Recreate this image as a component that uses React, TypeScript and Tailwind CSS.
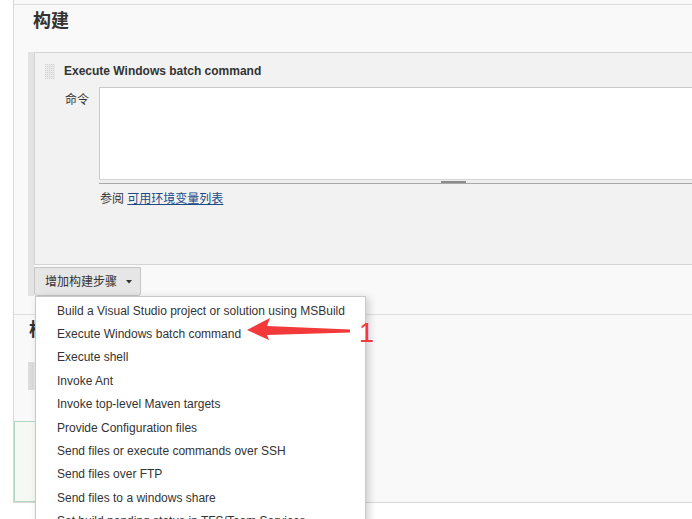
import React from "react";

const stepTypes = [
  "Build a Visual Studio project or solution using MSBuild",
  "Execute Windows batch command",
  "Execute shell",
  "Invoke Ant",
  "Invoke top-level Maven targets",
  "Provide Configuration files",
  "Send files or execute commands over SSH",
  "Send files over FTP",
  "Send files to a windows share",
  "Set build pending status in TFS/Team Services",
];

function DragHandle() {
  const dots = [];
  for (let y = 0; y < 15; y += 2) {
    for (let x = 0; x < 10; x += 2) {
      dots.push(<rect key={`${x}-${y}`} x={x} y={y} width="1" height="1" fill="#cfcfcf" />);
    }
  }
  return (
    <svg width="10" height="15" viewBox="0 0 10 15" className="shrink-0">
      <rect width="10" height="15" fill="#ebebeb" />
      {dots}
    </svg>
  );
}

export default function App() {
  return (
    <div
      className="relative w-[692px] h-[519px] overflow-hidden bg-white text-[12px] text-[#333]"
      style={{ fontFamily: '"Liberation Sans", Arial, "Noto Sans CJK SC", sans-serif' }}
    >
      {/* page body */}
      <div className="ml-[13px] h-[503px] border-l border-b border-[#d9d9d9] bg-[#f9f9f9] pt-[4px]">
        {/* 构建 section */}
        <div className="border-t border-[#dedede]">
          <h2 className="mt-[4px] pl-[19px] text-[18px] font-bold leading-[24px] text-[#333]">构建</h2>

          <div className="mt-[19px] ml-[14px] border-l-[6px] border-[#e3e3e3]">
            <div className="border-y border-l border-[#d4d4d4] bg-[#f2f2f2] pt-[9px] pb-[57px]">
              <div className="flex h-[18px] items-center pl-[10px] gap-[9px]">
                <DragHandle />
                <span className="font-bold leading-[18px]">Execute Windows batch command</span>
              </div>

              <div className="mt-[7px] flex gap-[10px]">
                <div className="w-[54px] shrink-0 pt-[5px] text-right leading-[16px]">命令</div>
                <div className="w-[708px] shrink-0">
                  <div className="h-[92px] border border-b-0 border-[#c9c9c9] bg-white" />
                  <div className="flex h-[5px] items-center justify-center border-t border-b border-t-[#d6d6d6] border-b-[#a8a8a8] bg-[#eeeeee]">
                    <div className="h-[2px] w-[25px] bg-[#8c8c8c]" />
                  </div>
                </div>
              </div>

              <div className="mt-[7px] ml-[65px] leading-[16px]">
                参阅 <a className="text-[#204a87] underline">可用环境变量列表</a>
              </div>
            </div>

            <button className="mt-[2px] flex h-[29px] items-center rounded-b-[3px] border border-[#c6c6c6] bg-[#e6e6e6] pl-[10px] pr-[8px] text-[12px] text-[#333]">
              <span>增加构建步骤</span>
              <svg width="6" height="4" viewBox="0 0 6 4" className="ml-[9px]">
                <path d="M0 0 L6 0 L3 3.5 Z" fill="#333" />
              </svg>
            </button>
          </div>
        </div>

        {/* 构建后操作 section */}
        <div className="mt-[18px] border-t border-[#dedede]">
          <h2 className="mt-[3px] pl-[15px] text-[18px] font-bold leading-[24px] text-[#333]">构建后操作</h2>
          <div className="mt-[20px] ml-[14px] h-[28px] w-[60px] border-l-[6px] border-[#dcdcdc] bg-[#ededed]" />
          <div className="mt-[31px] h-[81px] w-[330px] border border-[#b3d6bf] bg-[#f6f9f3]" />
        </div>
      </div>

      {/* dropdown menu */}
      <ul className="absolute left-[35px] top-[296px] w-[331px] border border-[#c8c8c8] bg-white pt-[2px] shadow-[3px_2px_8px_rgba(0,0,0,0.18)]">
        {stepTypes.map((t) => (
          <li key={t} className="flex h-[23.4px] items-center pl-[21px] whitespace-nowrap leading-[16px]">
            {t}
          </li>
        ))}
      </ul>

      {/* annotation arrow */}
      <svg className="pointer-events-none absolute left-0 top-0" width="692" height="519">
        <polygon
          points="247,330 270,318 267,326 350,329.5 350,332.5 267,335 269,340"
          fill="#f23a3a"
        />
      </svg>
      <div className="absolute left-[359px] top-[319px] text-[27px] leading-[28px] text-[#f23a3a]">1</div>
    </div>
  );
}
